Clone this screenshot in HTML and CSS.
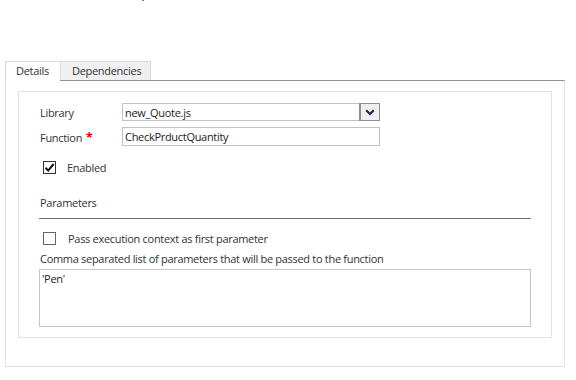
FILE: index.html
```html
<!DOCTYPE html>
<html>
<head>
<meta charset="utf-8">
<link rel="stylesheet" href="styles.css">
</head>
<body>
<div class="speck"><span class="sp-o"></span><span class="sp-b"></span></div>
<div class="page">
  <div class="tabs">
    <div class="tab active">Details</div>
    <div class="tab">Dependencies</div>
  </div>
  <div class="outer">
    <div class="inner">
      <div class="row lib">
        <label class="lbl">Library</label>
        <div class="select">
          <span class="sel-text">new_Quote.js</span>
          <span class="sel-btn"><svg width="10" height="7" viewBox="0 0 10 7"><path d="M1.2 1.2 L5 5 L8.8 1.2" fill="none" stroke="#1c2a4a" stroke-width="2.2"/></svg></span>
        </div>
      </div>
      <div class="row fn">
        <label class="lbl">Function <span class="req">*</span></label>
        <div class="input">CheckPrductQuantity</div>
      </div>
      <div class="check-row enabled">
        <span class="cb checked"><svg width="11" height="11" viewBox="0 0 11 11"><path d="M1.5 5.8 L4.2 8.6 L9.6 2" fill="none" stroke="#111" stroke-width="2"/></svg></span>
        <span class="cb-text">Enabled</span>
      </div>
      <div class="section">Parameters</div>
      <div class="check-row pass">
        <span class="cb"></span>
        <span class="cb-text">Pass execution context as first parameter</span>
      </div>
      <div class="hint">Comma separated list of parameters that will be passed to the function</div>
      <div class="textarea">'Pen'</div>
    </div>
  </div>
</div>
</body>
</html>
```

FILE: styles.css
```css
html, body {
  margin: 0;
  padding: 0;
  background: #fff;
}
body {
  font-family: "Open Sans", "Noto Sans", sans-serif;
  font-size: 11px;
  letter-spacing: -0.3px;
  color: #333;
  width: 576px;
  height: 380px;
  overflow: hidden;
  position: relative;
}
.speck {
  position: absolute;
  left: 142px;
  top: 0;
  display: flex;
}
.sp-o { width: 1px; height: 1px; background: #e8821c; }
.sp-b { width: 1px; height: 1px; background: #2a6fd0; }

.page {
  padding: 61px 0 0 5px;
  width: 560px;
}
.tabs {
  display: flex;
  height: 20px;
  position: relative;
  z-index: 1;
}
.tab {
  box-sizing: border-box;
  height: 19px;
  line-height: 18px;
  border: 1px solid #d9d9d9;
  border-bottom: none;
  background: #f0f0f0;
  padding: 0 0 0 11px;
  color: #333;
}
.tab.active {
  background: #fff;
  height: 20px;
  width: 55px;
  padding: 0 0 0 10px;
  border-right: none;
}
.tab + .tab {
  width: 91px;
  border-left: 1px solid #d9d9d9;
}
.outer {
  box-sizing: border-box;
  margin-top: -1px;
  width: 560px;
  height: 287px;
  border: 1px solid #e0e0e0;
  border-top: 1px solid #8e8fa0;
  padding: 10px 12px 0 12px;
}
.inner {
  box-sizing: border-box;
  height: 247px;
  border: 1px solid #e3e3e3;
  padding: 11px 20px 0 20px;
}
.row {
  display: grid;
  grid-template-columns: 83px 258px;
  align-items: center;
}
.lib { height: 18px; }
.fn { height: 19px; margin-top: 6px; }
.lbl {
  padding-left: 1px;
  color: #333;
}
.req {
  color: #e00000;
  font-size: 13px;
  font-weight: bold;
  margin-left: 1px;
}
.select, .input {
  box-sizing: border-box;
  height: 100%;
  border: 1px solid #c3c3c3;
  display: flex;
  align-items: center;
  color: #222;
  padding-left: 2px;
}
.select {
  justify-content: space-between;
}
.sel-btn {
  box-sizing: border-box;
  width: 19px;
  height: 16px;
  border-left: 1px solid #8f8f8f;
  background: #efefef;
  display: flex;
  align-items: center;
  justify-content: center;
  outline: 1px solid #8f8f8f;
}
.check-row {
  display: flex;
  align-items: center;
  height: 13px;
}
.cb {
  box-sizing: border-box;
  width: 13px;
  height: 13px;
  border: 1px solid #666;
  margin-left: 4px;
  display: flex;
  align-items: center;
  justify-content: center;
}
.cb.checked { border-color: #333; }
.cb-text { margin-left: 11px; }
.enabled { margin-top: 15px; }
.pass { margin-top: 13px; }
.pass .cb-text { margin-left: 12px; }
.section {
  margin-top: 21px;
  height: 16px;
  line-height: 16px;
  padding: 0 0 7px 1px;
  border-bottom: 1px solid #6f6f6f;
}
.hint {
  margin-top: 6px;
  height: 16px;
  line-height: 16px;
  padding-left: 1px;
}
.textarea {
  box-sizing: border-box;
  margin-top: 2px;
  height: 58px;
  border: 1px solid #c6c6c6;
  padding: 1px 2px;
  color: #222;
  line-height: 16px;
}
```
